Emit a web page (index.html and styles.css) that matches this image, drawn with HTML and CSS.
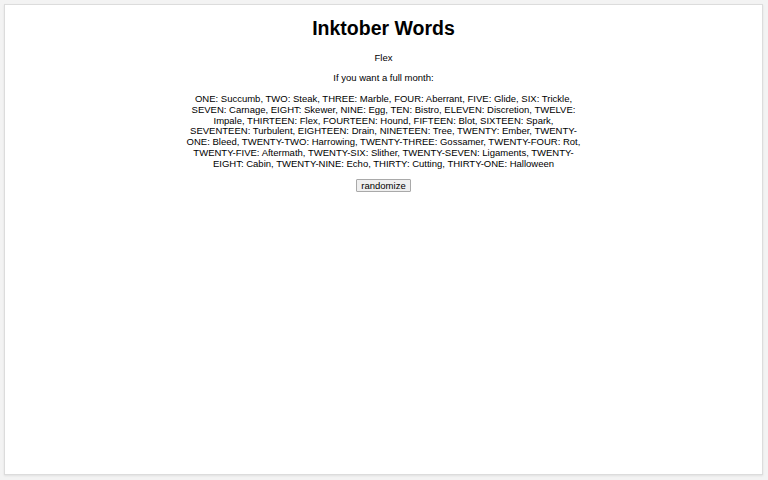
FILE: index.html
```html
<!DOCTYPE html>
<html lang="en">
<head>
  <meta charset="UTF-8" />
  <meta name="viewport" content="width=device-width, initial-scale=1" />
  <title>Inktober Words</title>
  <link rel="stylesheet" href="styles.css">
</head>
<body>
  <div class="page">
    <h1>Inktober Words</h1>
    <p id="word">Flex</p>
    <p>If you want a full month:</p>
    <p id="month" class="month">ONE: Succumb, TWO: Steak, THREE: Marble, FOUR: Aberrant, FIVE: Glide, SIX: Trickle, SEVEN: Carnage, EIGHT: Skewer, NINE: Egg, TEN: Bistro, ELEVEN: Discretion, TWELVE: Impale, THIRTEEN: Flex, FOURTEEN: Hound, FIFTEEN: Blot, SIXTEEN: Spark, SEVENTEEN: Turbulent, EIGHTEEN: Drain, NINETEEN: Tree, TWENTY: Ember, TWENTY-ONE: Bleed, TWENTY-TWO: Harrowing, TWENTY-THREE: Gossamer, TWENTY-FOUR: Rot, TWENTY-FIVE: Aftermath, TWENTY-SIX: Slither, TWENTY-SEVEN: Ligaments, TWENTY-EIGHT: Cabin, TWENTY-NINE: Echo, THIRTY: Cutting, THIRTY-ONE: Halloween</p>
    <button type="button" id="randomize" class="random-button">randomize</button>
  </div>
</body>
</html>
```

FILE: styles.css
```css
/* Grey backdrop with one white sheet on top */
html, body {
  margin: 0;
  height: 100%;
}

body {
  font-family: "Liberation Sans", Arial, sans-serif;
  font-size: 9.5px;
  background: #f3f3f3;
  color: #000;
  padding: 4px 5px 5px 4px;
  box-sizing: border-box;
}

.page {
  background: #fff;
  border: 1px solid #dcdcdc;
  box-shadow: 0 1px 2px rgba(0, 0, 0, 0.08);
  height: 100%;
  box-sizing: border-box;
  display: flex;
  flex-direction: column;
  align-items: center;
  text-align: center;
}

h1 {
  font-size: 19.5px;
  font-weight: 700;
  margin: 12px 0 12.5px;
}

p {
  margin: 0 0 10px;
  line-height: 10.8px;
}

.month {
  width: 400px;
  margin-bottom: 9px;
}

.random-button {
  font-family: "Liberation Sans", Arial, sans-serif;
  font-size: 9.5px;
  color: #000;
  background: #efefef;
  border: 1px solid #a9a9a9;
  border-radius: 1px;
  padding: 0 4px;
  height: 13px;
  line-height: 11px;
}
```
